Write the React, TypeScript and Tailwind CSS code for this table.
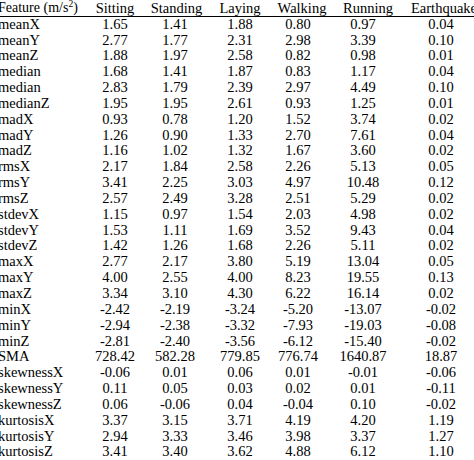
import React from "react";

const rows: [string, string[]][] = [
  ["meanX", ["1.65", "1.41", "1.88", "0.80", "0.97", "0.04"]],
  ["meanY", ["2.77", "1.77", "2.31", "2.98", "3.39", "0.10"]],
  ["meanZ", ["1.88", "1.97", "2.58", "0.82", "0.98", "0.01"]],
  ["median", ["1.68", "1.41", "1.87", "0.83", "1.17", "0.04"]],
  ["median", ["2.83", "1.79", "2.39", "2.97", "4.49", "0.10"]],
  ["medianZ", ["1.95", "1.95", "2.61", "0.93", "1.25", "0.01"]],
  ["madX", ["0.93", "0.78", "1.20", "1.52", "3.74", "0.02"]],
  ["madY", ["1.26", "0.90", "1.33", "2.70", "7.61", "0.04"]],
  ["madZ", ["1.16", "1.02", "1.32", "1.67", "3.60", "0.02"]],
  ["rmsX", ["2.17", "1.84", "2.58", "2.26", "5.13", "0.05"]],
  ["rmsY", ["3.41", "2.25", "3.03", "4.97", "10.48", "0.12"]],
  ["rmsZ", ["2.57", "2.49", "3.28", "2.51", "5.29", "0.02"]],
  ["stdevX", ["1.15", "0.97", "1.54", "2.03", "4.98", "0.02"]],
  ["stdevY", ["1.53", "1.11", "1.69", "3.52", "9.43", "0.04"]],
  ["stdevZ", ["1.42", "1.26", "1.68", "2.26", "5.11", "0.02"]],
  ["maxX", ["2.77", "2.17", "3.80", "5.19", "13.04", "0.05"]],
  ["maxY", ["4.00", "2.55", "4.00", "8.23", "19.55", "0.13"]],
  ["maxZ", ["3.34", "3.10", "4.30", "6.22", "16.14", "0.02"]],
  ["minX", ["-2.42", "-2.19", "-3.24", "-5.20", "-13.07", "-0.02"]],
  ["minY", ["-2.94", "-2.38", "-3.32", "-7.93", "-19.03", "-0.08"]],
  ["minZ", ["-2.81", "-2.40", "-3.56", "-6.12", "-15.40", "-0.02"]],
  ["SMA", ["728.42", "582.28", "779.85", "776.74", "1640.87", "18.87"]],
  ["skewnessX", ["-0.06", "0.01", "0.06", "0.01", "-0.01", "-0.06"]],
  ["skewnessY", ["0.11", "0.05", "0.03", "0.02", "0.01", "-0.11"]],
  ["skewnessZ", ["0.06", "-0.06", "0.04", "-0.04", "0.10", "-0.02"]],
  ["kurtosisX", ["3.37", "3.15", "3.71", "4.19", "4.20", "1.19"]],
  ["kurtosisY", ["2.94", "3.33", "3.46", "3.98", "3.37", "1.27"]],
  ["kurtosisZ", ["3.41", "3.40", "3.62", "4.88", "6.12", "1.10"]],
];

const grid =
  "grid grid-cols-[85px_60px_60px_70px_46px_84px_72px] w-[477px]";

function Cell({ children, className = "" }: { children: React.ReactNode; className?: string }) {
  return (
    <div className={"flex justify-center whitespace-nowrap " + className}>
      {children}
    </div>
  );
}

export default function App() {
  return (
    <div
      className="w-[474px] h-[460px] overflow-hidden bg-white text-black text-[14.5px] leading-none font-['Liberation_Serif',serif]"
      style={{ fontFamily: '"Liberation Serif", "Times New Roman", serif' }}
    >
      <div className={grid + " h-[17px] items-center border-b border-black -mb-px"}>
        <div className="whitespace-nowrap -ml-[2px] text-[14px]">
          Feature (m/s<span className="text-[9.5px] align-top relative -top-[1px]">2</span>)
        </div>
        <Cell>Sitting</Cell>
        <Cell className="pl-[3px]">Standing</Cell>
        <Cell>Laying</Cell>
        <Cell className="pl-[8px]">Walking</Cell>
        <Cell className="pl-[10px]">Running</Cell>
        <Cell className="pl-[6px]">Earthquake</Cell>
      </div>
      {rows.map(([label, vals], i) => (
        <div key={i} className={grid + " h-[15.85px] items-center"}>
          <div className="whitespace-nowrap -ml-[2px]">{label}</div>
          {vals.map((v, j) => (
            <Cell key={j}>{v}</Cell>
          ))}
        </div>
      ))}
    </div>
  );
}
